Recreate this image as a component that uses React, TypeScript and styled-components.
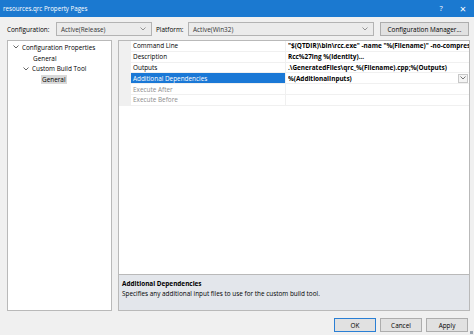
import React from "react";
import styled, { createGlobalStyle } from "styled-components";

const Global = createGlobalStyle`
  html, body { margin: 0; padding: 0; background: #f0f0f0; }
  body { font-family: "Open Sans", "Noto Sans", sans-serif; font-size: 6.4px; color: #000; }
  * { box-sizing: border-box; }
`;

const Window = styled.div`
  width: 474px;
  height: 335px;
  display: flex;
  flex-direction: column;
  background: #f0f0f0;
  overflow: hidden;
  position: relative;
`;

const TitleBar = styled.div`
  height: 17px;
  background: #1b79d0;
  color: #fff;
  display: flex;
  align-items: center;
  padding-left: 3px;
  font-size: 6.2px;
`;

const Title = styled.div`
  flex: 1;
`;

const TitleButton = styled.div<{ $big?: boolean }>`
  width: 22px;
  text-align: center;
  font-size: ${(p) => (p.$big ? "11px" : "7.5px")};
  line-height: 17px;
`;

const Toolbar = styled.div`
  display: flex;
  align-items: center;
  height: 14px;
  margin-top: 5px;
  padding-left: 7px;
  padding-right: 4px;
  white-space: nowrap;
`;

const Label = styled.span<{ $w: number }>`
  width: ${(p) => p.$w}px;
  flex-shrink: 0;
`;

const Combo = styled.div<{ $w: number; $mr?: number }>`
  width: ${(p) => p.$w}px;
  height: 14px;
  border: 1px solid #b3b3b3;
  background: #ebebeb;
  display: flex;
  align-items: center;
  padding-left: 4px;
  padding-right: 3px;
  color: #333;
  margin-right: ${(p) => p.$mr ?? 0}px;
  flex-shrink: 0;
`;

const ComboText = styled.span`
  flex: 1;
`;

const Button = styled.div<{ $default?: boolean; $w: number }>`
  width: ${(p) => p.$w}px;
  height: 14px;
  border: 1px solid ${(p) => (p.$default ? "#2a7fd4" : "#adadad")};
  background: #e1e1e1;
  display: flex;
  align-items: center;
  justify-content: center;
  white-space: nowrap;
  flex-shrink: 0;
`;

const Main = styled.div`
  display: flex;
  gap: 6px;
  margin-top: 4px;
  padding-left: 7px;
  padding-right: 4px;
  height: 271px;
`;

const Tree = styled.div`
  width: 105px;
  border: 1px solid #b9b9b9;
  background: #fff;
  padding-top: 1px;
`;

const TreeItem = styled.div<{ $indent: number }>`
  height: 10.7px;
  display: flex;
  align-items: center;
  padding-left: ${(p) => p.$indent}px;
  white-space: nowrap;
`;

const Chevron = styled.svg`
  width: 6px;
  height: 4px;
  margin-right: 2px;
`;

const TreeText = styled.span<{ $selected?: boolean }>`
  background: ${(p) => (p.$selected ? "#d9d9d9" : "transparent")};
  padding: 0 1px;
  line-height: 9px;
`;

const GridPanel = styled.div`
  flex: 1;
  border: 1px solid #b9b9b9;
  display: flex;
  flex-direction: column;
  min-width: 0;
`;

const Grid = styled.div`
  flex: 1;
  background: #fff;
  overflow: hidden;
  border-bottom: 1px solid #b9b9b9;
`;

const Row = styled.div`
  display: grid;
  grid-template-columns: 12px 155px 1fr;
  height: 10.8px;
  white-space: nowrap;
`;

const Margin = styled.div`
  background: #f0f0f0;
`;

const NameCell = styled.div<{ $selected?: boolean; $disabled?: boolean }>`
  background: ${(p) => (p.$selected ? "#1a78d6" : "#fff")};
  color: ${(p) => (p.$selected ? "#fff" : p.$disabled ? "#8d8d8d" : "#000")};
  border-bottom: 1px solid #f0f0f0;
  border-right: 1px solid #f0f0f0;
  padding-left: 2px;
  display: flex;
  align-items: center;
  overflow: hidden;
`;

const ValueCell = styled.div`
  font-weight: 700;
  border-bottom: 1px solid #f0f0f0;
  padding-left: 2px;
  display: flex;
  align-items: center;
  overflow: hidden;
`;

const ValueText = styled.span`
  flex: 1;
  overflow: hidden;
`;

const DropButton = styled.div`
  width: 10px;
  height: 9px;
  border: 1px solid #c8c8c8;
  background: #f4f4f4;
  display: flex;
  align-items: center;
  justify-content: center;
  margin-right: 1px;
  flex-shrink: 0;
`;

const Description = styled.div`
  height: 35px;
  background: #e3e6eb;
  padding: 4px 3px;
`;

const DescTitle = styled.div`
  font-weight: 700;
  line-height: 9px;
`;

const DescText = styled.div`
  line-height: 9px;
  margin-top: 1px;
`;

const Footer = styled.div`
  display: flex;
  justify-content: flex-end;
  gap: 4px;
  margin-top: 7px;
  padding-right: 6px;
`;

const Grip = styled.div`
  position: absolute;
  right: 1px;
  bottom: 1px;
  width: 3px;
  height: 3px;
  background: #9aa5b1;
`;

const SmallChevron = styled.svg`
  width: 6px;
  height: 4px;
`;

const ChevronDown = ({ color = "#555" }: { color?: string }) => (
  <Chevron viewBox="0 0 6 4">
    <path d="M0.5 0.5 L3 3 L5.5 0.5" fill="none" stroke={color} strokeWidth="0.9" />
  </Chevron>
);

const rows = [
  { name: "Command Line", value: "\"$(QTDIR)\\bin\\rcc.exe\" -name \"%(Filename)\" -no-compress \"%(FullPath)\" -o .\\GeneratedFiles\\qrc_%(Filename).cpp" },
  { name: "Description", value: "Rcc%27ing %(Identity)..." },
  { name: "Outputs", value: ".\\GeneratedFiles\\qrc_%(Filename).cpp;%(Outputs)" },
  { name: "Additional Dependencies", value: "%(AdditionalInputs)", selected: true },
  { name: "Execute After", value: "", disabled: true },
  { name: "Execute Before", value: "", disabled: true },
];

export default function App() {
  return (
    <Window>
      <Global />
      <TitleBar>
        <Title>resources.qrc Property Pages</Title>
        <TitleButton>?</TitleButton>
        <TitleButton $big>×</TitleButton>
      </TitleBar>
      <Toolbar>
        <Label $w={49}>Configuration:</Label>
        <Combo $w={96} $mr={4}>
          <ComboText>Active(Release)</ComboText>
          <ChevronDown color="#888" />
        </Combo>
        <Label $w={32}>Platform:</Label>
        <Combo $w={186} $mr={6}>
          <ComboText>Active(Win32)</ComboText>
          <ChevronDown color="#888" />
        </Combo>
        <Button $w={89}>Configuration Manager...</Button>
      </Toolbar>
      <Main>
        <Tree>
          <TreeItem $indent={5}>
            <ChevronDown />
            <TreeText>Configuration Properties</TreeText>
          </TreeItem>
          <TreeItem $indent={24}>
            <TreeText>General</TreeText>
          </TreeItem>
          <TreeItem $indent={15}>
            <ChevronDown />
            <TreeText>Custom Build Tool</TreeText>
          </TreeItem>
          <TreeItem $indent={33}>
            <TreeText $selected>General</TreeText>
          </TreeItem>
        </Tree>
        <GridPanel>
          <Grid>
            {rows.map((r) => (
              <Row key={r.name}>
                <Margin />
                <NameCell $selected={r.selected} $disabled={r.disabled}>
                  {r.name}
                </NameCell>
                <ValueCell>
                  <ValueText>{r.value}</ValueText>
                  {r.selected && (
                    <DropButton>
                      <SmallChevron viewBox="0 0 6 4">
                        <path d="M0.5 0.5 L3 3 L5.5 0.5" fill="none" stroke="#666" strokeWidth="0.9" />
                      </SmallChevron>
                    </DropButton>
                  )}
                </ValueCell>
              </Row>
            ))}
          </Grid>
          <Description>
            <DescTitle>Additional Dependencies</DescTitle>
            <DescText>Specifies any additional input files to use for the custom build tool.</DescText>
          </Description>
        </GridPanel>
      </Main>
      <Footer>
        <Button $default $w={42}>OK</Button>
        <Button $w={42}>Cancel</Button>
        <Button $w={42}>Apply</Button>
      </Footer>
      <Grip />
    </Window>
  );
}
